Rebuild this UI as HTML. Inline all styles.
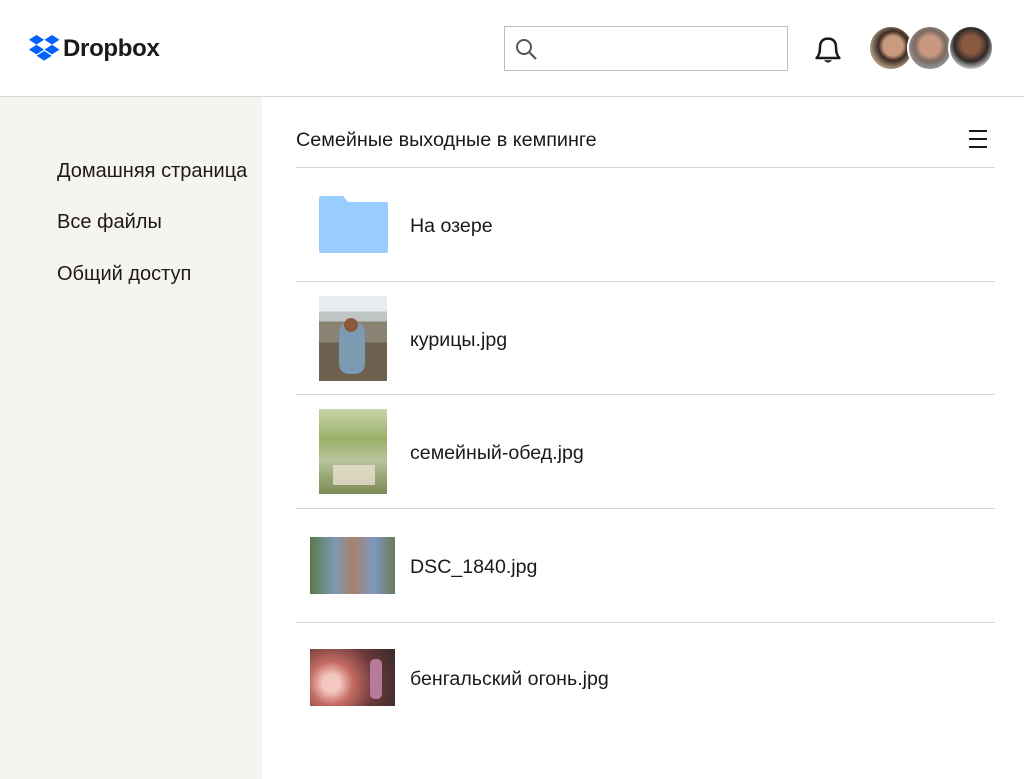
<!DOCTYPE html>
<html><head><meta charset="utf-8"><style>
*{margin:0;padding:0;box-sizing:border-box}
body{width:1024px;height:779px;overflow:hidden;background:#fff;font-family:"Liberation Sans",Arial,sans-serif;color:#1e1919;position:relative}
.hdr{position:absolute;left:0;top:0;width:1024px;height:97px;border-bottom:1px solid #d6d6d6;background:#fff}
.side{position:absolute;left:0;top:97px;width:262px;height:682px;background:#f5f4f1}
.side div{position:absolute;left:57px;font-size:20px;color:#1e1919}
.abs{position:absolute}
.line{position:absolute;left:296px;width:699px;height:1px;background:#d6d6d6}
.name{position:absolute;left:410px;font-size:19.6px}
.av{position:absolute;top:25px;width:46px;height:46px;border-radius:50%;border:2px solid #fff}
</style></head><body>
<div class="hdr">
  <svg class="abs" style="left:29px;top:35px" width="31" height="26" viewBox="0 0 31 26">
    <g fill="#0061fe">
      <polygon points="7.5,0 15,4.8 7.5,9.6 0,4.8"/>
      <polygon points="23,0 30.5,4.8 23,9.6 15.5,4.8"/>
      <polygon points="7.5,9.8 15,14.6 7.5,19.4 0,14.6"/>
      <polygon points="23,9.8 30.5,14.6 23,19.4 15.5,14.6"/>
      <polygon points="15.2,16 22.7,20.8 15.2,25.6 7.7,20.8"/>
    </g>
  </svg>
  <div class="abs" style="left:63px;top:35px;font-size:24px;font-weight:bold;letter-spacing:-0.3px;color:#1e1919">Dropbox</div>
  <div class="abs" style="left:504px;top:26px;width:284px;height:45px;border:1px solid #bdbdbd"></div>
  <svg class="abs" style="left:514px;top:37px" width="24" height="24" viewBox="0 0 24 24"><circle cx="10" cy="10" r="7" fill="none" stroke="#555" stroke-width="2"/><line x1="15" y1="15" x2="22" y2="22" stroke="#555" stroke-width="2.2"/></svg>
  <svg class="abs" style="left:812px;top:34px" width="32" height="32" viewBox="0 0 28 28"><path d="M4 21 Q7 18 7 12 Q7 4 14 4 Q21 4 21 12 Q21 18 24 21 Z" fill="none" stroke="#1e1919" stroke-width="2.2" stroke-linejoin="round"/><path d="M10.5 23 Q14 27 17.5 23 Z" fill="#1e1919"/></svg>
  <div class="av" style="left:868px;background:radial-gradient(circle at 55% 45%,#c99a7e 0 30%,#3b2a22 45%,#d8c3a8 80%)"></div>
  <div class="av" style="left:907px;background:radial-gradient(circle at 50% 45%,#c89880 0 32%,#7a6a60 50%,#9aa0a6 80%)"></div>
  <div class="av" style="left:948px;background:radial-gradient(circle at 50% 42%,#8a5a40 0 28%,#2e2a28 52%,#d8dadc 78%)"></div>
</div>
<div class="side">
  <div style="top:63px">Домашняя страница</div>
  <div style="top:114px">Все файлы</div>
  <div style="top:166px">Общий доступ</div>
</div>
<div class="abs" style="left:296px;top:129px;font-size:19.8px">Семейные выходные в кемпинге</div>
<svg class="abs" style="left:968px;top:129px" width="20" height="20" viewBox="0 0 20 20"><g stroke="#1e1919" stroke-width="2"><line x1="1" y1="2" x2="19" y2="2"/><line x1="1" y1="10" x2="19" y2="10"/><line x1="1" y1="18" x2="19" y2="18"/></g></svg>
<div class="line" style="top:167px"></div>
<svg class="abs" style="left:319px;top:196px" width="69" height="57" viewBox="0 0 69 57"><path d="M0 2 Q0 0 2 0 H24 L29 6 H67 Q69 6 69 8 V55 Q69 57 67 57 H2 Q0 57 0 55 Z" fill="#99ccff"/></svg>
<div class="name" style="top:215px">На озере</div>
<div class="line" style="top:281px"></div>
<div class="abs" style="left:319px;top:296px;width:68px;height:85px;background:linear-gradient(180deg,#e8ecef 0 18%,#bfc4c4 18% 30%,#8a8272 30% 55%,#6f6050 55% 100%)"><div class="abs" style="left:20px;top:26px;width:26px;height:52px;border-radius:10px;background:#7d9ab3"></div><div class="abs" style="left:25px;top:22px;width:14px;height:14px;border-radius:50%;background:#8b5a3c"></div></div>
<div class="name" style="top:329px">курицы.jpg</div>
<div class="line" style="top:394px"></div>
<div class="abs" style="left:319px;top:409px;width:68px;height:85px;background:linear-gradient(180deg,#c9d6a8 0%,#9bb06a 35%,#b8c49a 60%,#7a8a55 100%)"><div class="abs" style="left:14px;top:56px;width:42px;height:20px;background:#e8e0d0;opacity:.8"></div></div>
<div class="name" style="top:442px">семейный-обед.jpg</div>
<div class="line" style="top:508px"></div>
<div class="abs" style="left:310px;top:537px;width:85px;height:57px;background:linear-gradient(90deg,#5c7a4a 0%,#7d98b5 30%,#a8826a 50%,#7d98c0 75%,#6a7a5a 100%)"></div>
<div class="name" style="top:556px">DSC_1840.jpg</div>
<div class="line" style="top:622px"></div>
<div class="abs" style="left:310px;top:649px;width:85px;height:57px;background:radial-gradient(circle at 25% 60%,#f2c8c0 0 12%,#c46a62 30%,#6a3a3a 60%,#3a2a2e 100%)"><div class="abs" style="left:60px;top:10px;width:12px;height:40px;background:#b87a9a;border-radius:5px"></div></div>
<div class="name" style="top:668px">бенгальский огонь.jpg</div>
</body></html>
